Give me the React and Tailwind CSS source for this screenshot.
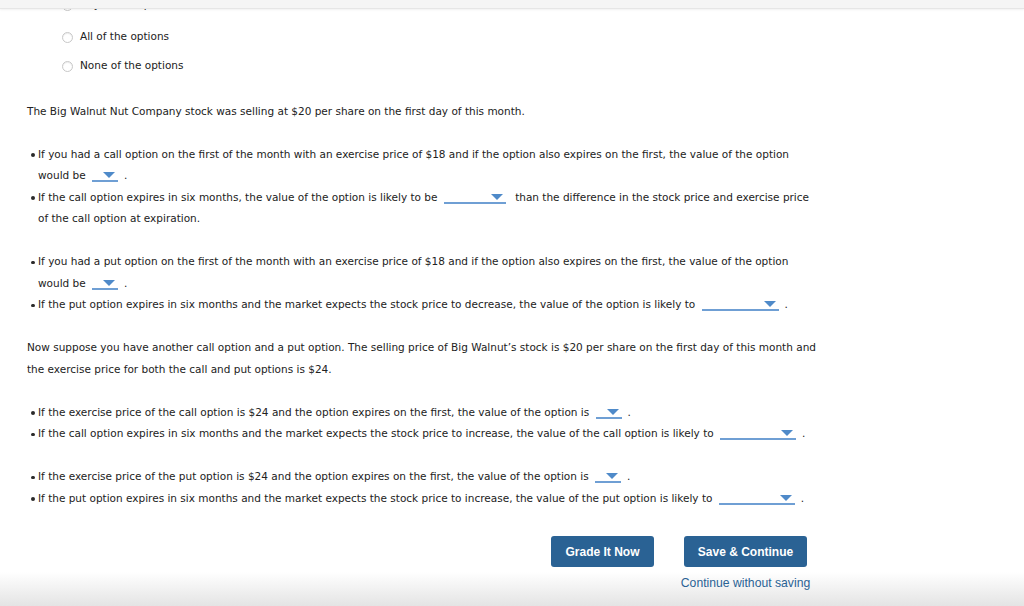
import React from "react";

const font = { fontFamily: '"DejaVu Sans", Verdana, sans-serif' };

function Drop({ w = "w-[26px]" }) {
  return (
    <span className={`inline-block ${w} h-[12px] overflow-hidden leading-none border-b-2 border-[#6f9fd4] align-[-3px] ml-[3px] mr-[6px] pr-[3px]`}>
      <svg width="12" height="6" viewBox="0 0 12 6" className="block ml-auto mt-[2px]">
        <path d="M0 0 H12 L6 6 Z" fill="#4f8ac9" />
      </svg>
    </span>
  );
}

function Bullet({ children }) {
  return (
    <li className="relative pl-[7px] before:content-[''] before:absolute before:left-0 before:top-[9.5px] before:w-[3.5px] before:h-[3.5px] before:rounded-full before:bg-[#2a2a2a]">
      {children}
    </li>
  );
}

function Radio({ label, h = "h-[29px]", extra = "" }) {
  return (
    <div className={`flex items-center ${h} pl-[62px] gap-[7px] ${extra}`}>
      <span className="w-[11px] h-[11px] rounded-full border border-[#c8c8c8] bg-white shadow-[inset_0_1px_1px_rgba(0,0,0,0.08)]" />
      <span>{label}</span>
    </div>
  );
}

export default function App() {
  return (
    <div className="w-[1024px] h-[606px] overflow-hidden bg-white text-[10.5px] text-[#222] relative" style={font}>
      <div className="absolute top-0 left-0 right-0 h-[9px] bg-[#f5f5f5] border-b border-[#e6e6e6] shadow-[0_1px_2px_rgba(0,0,0,0.06)] z-10" />
      <div className="-mt-[6px]">
        <Radio label="Any of the options" h="h-[22px]" />
        <Radio label="All of the options" extra="mt-[6.5px]" />
        <Radio label="None of the options" />
      </div>
      <div className="leading-[21.5px] pl-[27px] pr-[206px] mt-[20px]">
        <p>The Big Walnut Nut Company stock was selling at $20 per share on the first day of this month.</p>
        <ul className="mt-[21.5px] pl-[4px]">
          <Bullet>
            If you had a call option on the first of the month with an exercise price of $18 and if the option also expires on the first, the value of the option would be <Drop />.
          </Bullet>
          <Bullet>
            If the call option expires in six months, the value of the option is likely to be <Drop w="w-[62px]" /> than the difference in the stock price and exercise price of the call option at expiration.
          </Bullet>
        </ul>
        <ul className="mt-[21.5px] pl-[4px]">
          <Bullet>
            If you had a put option on the first of the month with an exercise price of $18 and if the option also expires on the first, the value of the option would be <Drop />.
          </Bullet>
          <Bullet>
            If the put option expires in six months and the market expects the stock price to decrease, the value of the option is likely to <Drop w="w-[77px]" />.
          </Bullet>
        </ul>
        <p className="mt-[21.5px]">
          Now suppose you have another call option and a put option. The selling price of Big Walnut’s stock is $20 per share on the first day of this month and the exercise price for both the call and put options is $24.
        </p>
        <ul className="mt-[21.5px] pl-[4px]">
          <Bullet>
            If the exercise price of the call option is $24 and the option expires on the first, the value of the option is <Drop />.
          </Bullet>
          <Bullet>
            If the call option expires in six months and the market expects the stock price to increase, the value of the call option is likely to <Drop w="w-[76px]" />.
          </Bullet>
        </ul>
        <ul className="mt-[21.5px] pl-[4px]">
          <Bullet>
            If the exercise price of the put option is $24 and the option expires on the first, the value of the option is <Drop />.
          </Bullet>
          <Bullet>
            If the put option expires in six months and the market expects the stock price to increase, the value of the put option is likely to <Drop w="w-[76px]" />.
          </Bullet>
        </ul>
      </div>
      <div className="flex justify-end pr-[217px] gap-[30px] mt-[27px] relative z-10" style={{ fontFamily: '"Liberation Sans", Arial, sans-serif' }}>
        <button className="w-[103px] h-[31px] rounded-[3px] bg-[#2a6294] text-white text-[12px] font-bold">Grade It Now</button>
        <div className="w-[123px] flex flex-col items-center">
          <button className="w-[123px] h-[31px] rounded-[3px] bg-[#2a6294] text-white text-[12px] font-bold">Save &amp; Continue</button>
          <a className="mt-[9px] whitespace-nowrap text-[12.2px] text-[#2a6294] leading-[14px]">Continue without saving</a>
        </div>
      </div>
      <div className="absolute left-0 right-0 bottom-0 h-[34px] bg-gradient-to-b from-white/0 to-[#e4e4e4] pointer-events-none" />
    </div>
  );
}
